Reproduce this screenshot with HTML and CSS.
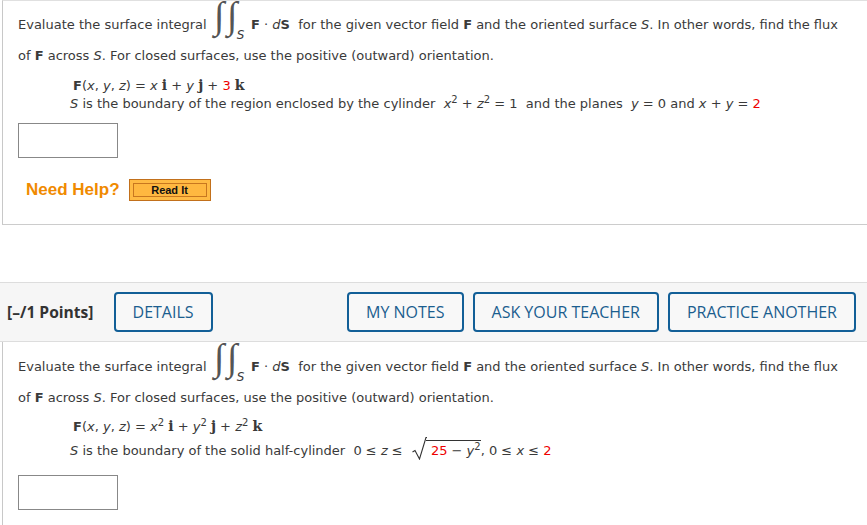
FILE: index.html
```html
<!DOCTYPE html>
<html>
<head>
<meta charset="utf-8">
<link rel="stylesheet" href="styles.css">
</head>
<body>
<div class="page">
  <div class="panel first">
    <div class="q">
      <p class="l1">Evaluate the surface integral <span class="int"><span class="ig i1">∫</span><span class="ig i2">∫</span><span class="sub">S</span></span> <b>F</b> · <i>d</i><b>S</b>&nbsp; for the given vector field <b>F</b> and the oriented surface <i>S</i>. In other words, find the flux</p>
      <p class="l2">of <b>F</b> across <i>S</i>. For closed surfaces, use the positive (outward) orientation.</p>
      <div class="math">
        <div class="m1"><b>F</b>(<i>x</i>, <i>y</i>, <i>z</i>) = <i>x</i> <b class="v">i</b> + <i>y</i> <b class="v">j</b> + <span class="red">3</span> <b class="v">k</b></div>
        <div class="m2"><i>S</i> is the boundary of the region enclosed by the cylinder&nbsp; <i>x</i><sup>2</sup> + <i>z</i><sup>2</sup> = 1&nbsp; and the planes&nbsp; <i>y</i> = 0 and <i>x</i> + <i>y</i> = <span class="red">2</span></div>
      </div>
      <div class="answer"></div>
      <div class="help">
        <span class="need">Need Help?</span>
        <span class="readit"><span class="readit-in">Read It</span></span>
      </div>
    </div>
  </div>

  <div class="header">
    <span class="points">[–/1 Points]</span>
    <span class="btn">DETAILS</span>
    <div class="right">
      <span class="btn">MY NOTES</span>
      <span class="btn">ASK YOUR TEACHER</span>
      <span class="btn">PRACTICE ANOTHER</span>
    </div>
  </div>

  <div class="panel second">
    <div class="q">
      <p class="l1">Evaluate the surface integral <span class="int"><span class="ig i1">∫</span><span class="ig i2">∫</span><span class="sub">S</span></span> <b>F</b> · <i>d</i><b>S</b>&nbsp; for the given vector field <b>F</b> and the oriented surface <i>S</i>. In other words, find the flux</p>
      <p class="l2">of <b>F</b> across <i>S</i>. For closed surfaces, use the positive (outward) orientation.</p>
      <div class="math m-second">
        <div class="m1"><b>F</b>(<i>x</i>, <i>y</i>, <i>z</i>) = <i>x</i><sup>2</sup> <b class="v">i</b> + <i>y</i><sup>2</sup> <b class="v">j</b> + <i>z</i><sup>2</sup> <b class="v">k</b></div>
        <div class="m2 sq"><i>S</i> is the boundary of the solid half-cylinder&nbsp; 0 ≤ <i>z</i> ≤ <span class="root"><svg class="rad" width="15" height="23" viewBox="0 0 15 23"><path d="M0.5 15 L3 13.5 L7.5 22 L14 0.5 L15 0.5" fill="none" stroke="#333" stroke-width="1.1"/></svg><span class="under"><span class="red">25</span> − <i>y</i><sup>2</sup></span></span>, 0 ≤ <i>x</i> ≤ <span class="red">2</span></div>
      </div>
      <div class="answer a2"></div>
    </div>
  </div>
</div>
</body>
</html>
```
FILE: styles.css
```css
html, body {
  margin: 0;
  padding: 0;
  background: #fff;
}
.page {
  width: 867px;
  height: 525px;
  overflow: hidden;
  font-family: "DejaVu Sans", Verdana, sans-serif;
  font-size: 13px;
  color: #3a3a3a;
}
.panel {
  margin-left: 2px;
  border-left: 1px solid #c8c8c8;
}
.first {
  border-top: 1px solid #e0e0e0;
  border-bottom: 1px solid #cccccc;
  height: 225px;
  box-sizing: border-box;
}
.q {
  padding-left: 15px;
}
.first .q {
  padding-top: 7px;
}
p {
  margin: 0;
}
.l1 {
  line-height: 34px;
  height: 34px;
}
.l2 {
  margin-top: 5px;
  line-height: 18px;
}
b {
  font-weight: bold;
}
.int {
  display: inline-block;
  position: relative;
  width: 30px;
  height: 20px;
  vertical-align: -3px;
  margin: 0 3px 0 3px;
}
.ig {
  position: absolute;
  top: -23px;
  padding: 0 7px 0 3px;
  font-family: "Liberation Serif", serif;
  font-size: 38px;
  font-style: italic;
  font-weight: normal;
  line-height: 52px;
  color: #555;
}
.i1 {
  left: -3px;
}
.i2 {
  left: 10px;
}
.sub {
  position: absolute;
  left: 23px;
  top: 17px;
  font-style: italic;
  font-size: 12px;
  line-height: 12px;
}
.math {
  padding-left: 52px;
  margin-top: 11px;
}
.m-second {
  margin-top: 10px;
}
.m1 {
  line-height: 18px;
  margin-left: 3px;
}
.m2 {
  line-height: 20px;
  margin-top: -1px;
}
.v {
  font-family: "DejaVu Serif", serif;
  font-weight: bold;
  font-size: 14px;
}
.red {
  color: #ee0000;
}
sup {
  font-size: 10px;
  line-height: 0;
  vertical-align: 5px;
}
.answer {
  width: 98px;
  height: 33px;
  border: 1px solid #888;
  margin-top: 9px;
}
.help {
  display: flex;
  align-items: center;
  margin-top: 21px;
  padding-left: 8px;
}
.need {
  font-family: "Liberation Sans", Arial, sans-serif;
  font-weight: bold;
  font-size: 17px;
  color: #f08a00;
}
.readit {
  display: inline-block;
  margin-left: 9px;
  border: 1px solid #c2701b;
  background: #ffbb44;
  padding: 3px;
}
.readit-in {
  display: block;
  width: 72px;
  height: 12px;
  border: 1px solid #c8771f;
  background: #ffb840;
  text-align: center;
  font-family: "Liberation Sans", Arial, sans-serif;
  font-weight: bold;
  font-size: 11px;
  line-height: 13px;
  color: #111;
}
.header {
  margin-top: 57px;
  height: 60px;
  box-sizing: border-box;
  border-top: 1px solid #dddddd;
  border-bottom: 1px solid #dddddd;
  background: #f6f6f6;
  display: flex;
  align-items: center;
  padding: 0 11px 0 7px;
  font-family: "Open Sans", "Noto Sans", sans-serif;
}
.points {
  font-weight: bold;
  font-size: 15.6px;
  color: #333;
  margin-right: 20px;
}
.btn {
  display: inline-flex;
  align-items: center;
  justify-content: center;
  height: 40px;
  box-sizing: border-box;
  border: 2px solid #125f97;
  border-radius: 4px;
  padding: 0 17px;
  font-size: 16px;
  color: #1b5e8f;
  background: #f8f8f8;
}
.right {
  margin-left: auto;
  display: flex;
  gap: 9px;
}
.second .q {
  padding-top: 8px;
}
.second {
  height: 200px;
}
.m2.sq {
  margin-top: 1px;
  line-height: 22px;
}
.root {
  display: inline-block;
  white-space: nowrap;
  margin-left: 5px;
}
.rad {
  display: inline-block;
  vertical-align: -5px;
}
.under {
  display: inline-block;
  line-height: 16px;
  border-top: 1px solid #333;
  padding: 2px 0 0 5px;
  margin-left: -1px;
}
.a2 {
  margin-top: 13px;
}
```
